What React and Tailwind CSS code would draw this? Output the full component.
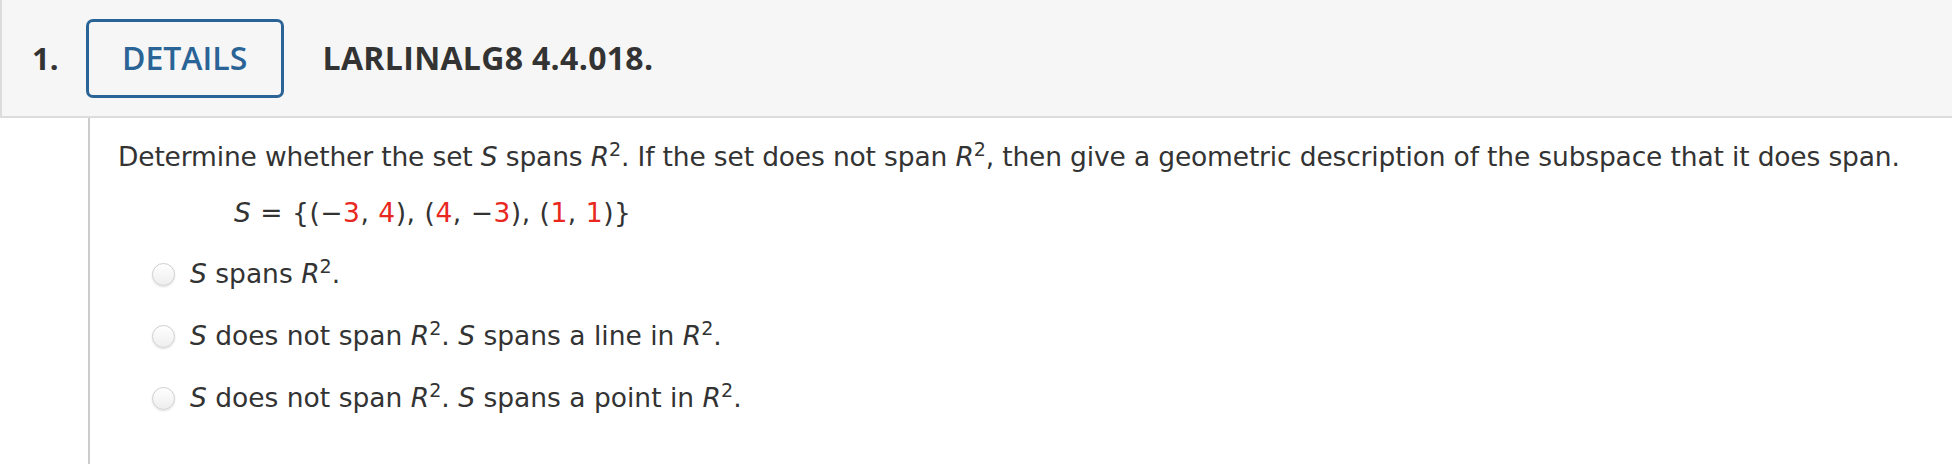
import React from 'react'

const Red = ({ children }) => <span className="text-[#e8281e]">{children}</span>
const I = ({ children }) => <i className="italic">{children}</i>
const R2 = () => (<><I>R</I><sup className="text-[0.72em] -top-[0.55em]">2</sup></>)

const options = [
  <><I>S</I> spans <R2 />.</>,
  <><I>S</I> does not span <R2 />. <I>S</I> spans a line in <R2 />.</>,
  <><I>S</I> does not span <R2 />. <I>S</I> spans a point in <R2 />.</>,
]

export default function App() {
  return (
    <div className="w-[1952px] h-[464px] bg-white text-[#333] font-['DejaVu_Sans',sans-serif]">
      {/* Question header */}
      <div className="h-[118px] bg-[#f6f6f6] border-l-2 border-b-2 border-[#dcdcdc] flex items-center pl-[30px] font-['Open_Sans',sans-serif]">
        <span className="text-[31px] font-bold text-[#333]">1.</span>
        <button className="ml-[27px] w-[198px] h-[79px] border-[3px] border-[#2a6496] rounded-[7px] text-[#2a6496] text-[32px] font-semibold">
          DETAILS
        </button>
        <span className="ml-[39px] text-[32px] font-bold text-[#333] tracking-[0.01em]">LARLINALG8 4.4.018.</span>
      </div>

      {/* Question body */}
      <div className="ml-[88px] h-[346px] border-l-2 border-[#cccccc] pl-[28px] pt-[19px] text-[26.5px] leading-[40px]">
        <p className="whitespace-nowrap tracking-[-0.006em]">
          Determine whether the set <I>S</I> spans <R2 />. If the set does not span <R2 />, then give a geometric description of the subspace that it does span.
        </p>
        <p className="mt-[16px] pl-[116px] tracking-[0.02em]">
          <I>S</I> = {'{'}(−<Red>3</Red>, <Red>4</Red>), (<Red>4</Red>, −<Red>3</Red>), (<Red>1</Red>, <Red>1</Red>){'}'}
        </p>
        <div className="mt-[21px] pl-[34px] flex flex-col gap-[22px]">
          {options.map((o, i) => (
            <label key={i} className="flex items-center">
              <span className="w-[23px] h-[23px] rounded-full border border-[#cfcfcf] bg-gradient-to-b from-[#ffffff] to-[#eeeeee] shadow-[0_1px_2px_rgba(0,0,0,0.12)]" />
              <span className="ml-[15px]">{o}</span>
            </label>
          ))}
        </div>
      </div>
    </div>
  )
}
